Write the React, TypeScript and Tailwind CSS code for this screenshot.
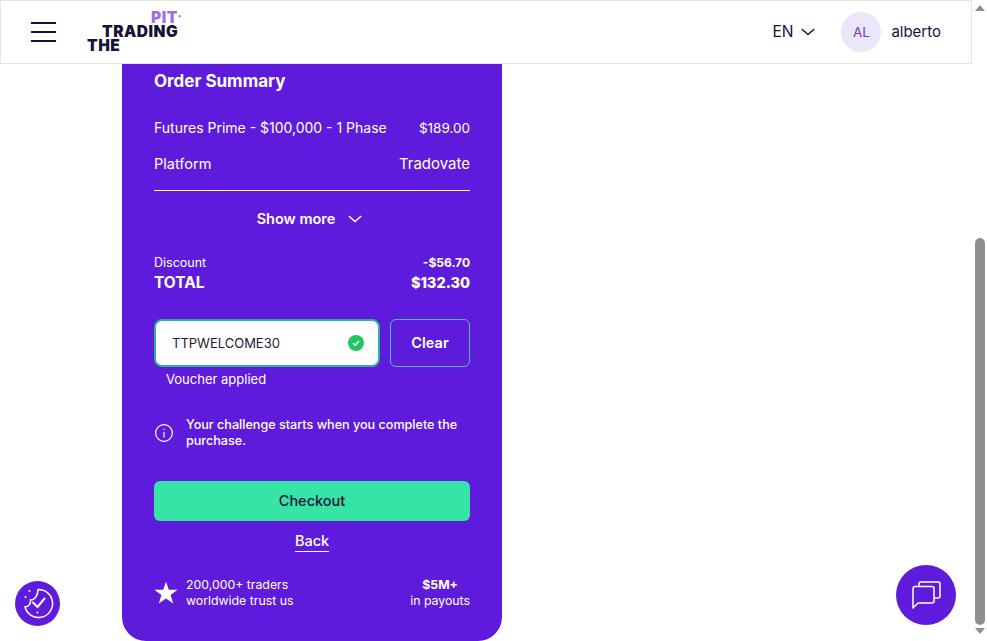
const font = { fontFamily: "Inter, 'Noto Sans', sans-serif" };

const Chevron = ({ className }: { className?: string }) => (
  <svg className={className} width="14" height="8" viewBox="0 0 14 8" fill="none" stroke="currentColor" strokeWidth="1.4">
    <path d="M.8 1 7 6.600 13.200 1" />
  </svg>
);

const Logo = () => (
  <div className="flex w-[92px] flex-col text-[15.5px] font-black leading-[14px] tracking-[0.5px] text-[#17123a]">
    <span className="ml-[64px] text-[#a06fe3]">PIT<sup className="text-[6px] leading-none">*</sup></span>
    <span className="ml-[15px]">TRADING</span>
    <span>THE</span>
  </div>
);

const Header = () => (
  <header className="flex h-[64px] shrink-0 items-center justify-between border border-[#e4e4e4] bg-white pl-[30px] pr-[30px]">
    <div className="flex items-center gap-[31px]">
      <div className="flex w-[25px] flex-col gap-[7px]">
        <div className="h-[2px] bg-[#17123a]" />
        <div className="h-[2px] bg-[#17123a]" />
        <div className="h-[2px] bg-[#17123a]" />
      </div>
      <Logo />
    </div>
    <div className="flex items-center">
      <span className="text-[15.5px] text-[#17123a]">EN</span>
      <Chevron className="ml-[8px] text-[#17123a]" />
      <div className="ml-[26px] flex h-[40px] w-[40px] items-center justify-center rounded-full bg-[#ece6fa] text-[13.5px] text-[#6a3bc8]">
        AL
      </div>
      <span className="ml-[10px] text-[15px] text-[#17123a]">alberto</span>
    </div>
  </header>
);

const OrderCard = () => (
  <section className="ml-[122px] flex h-[577px] w-[380px] flex-col rounded-b-[24px] bg-[#5f1bdc] px-[32px] pt-[7px] text-white">
    <h2 className="text-[17px] font-bold leading-[20px]">Order Summary</h2>
    <div className="mt-[27px] flex flex-col gap-[16px]">
      <div className="flex items-center justify-between text-[14px] leading-[20px]">
        <span>Futures Prime - $100,000 - 1 Phase</span>
        <span className="text-[13.500px]">$189.00</span>
      </div>
      <div className="flex items-center justify-between text-[14.5px] leading-[20px]">
        <span>Platform</span>
        <span className="text-[15px]">Tradovate</span>
      </div>
    </div>
    <div className="mt-[16px] h-px bg-white" />
    <div className="mt-[18px] flex items-center justify-center gap-[13px] pr-[5px] text-[14.5px] font-semibold leading-[20px]">
      <span>Show more</span>
      <Chevron />
    </div>
    <div className="mt-[26px] flex items-center justify-between text-[12.5px] leading-[16px]">
      <span>Discount</span>
      <span className="text-[12px] font-bold">-$56.70</span>
    </div>
    <div className="mt-[1px] flex items-center justify-between font-bold leading-[22px]">
      <span className="text-[15.5px]">TOTAL</span>
      <span className="text-[14.500px] font-extrabold">$132.30</span>
    </div>
    <div className="mt-[25px] flex gap-[10px]">
      <div className="flex h-[48px] flex-1 items-center justify-between rounded-[8px] border-[2px] border-[#2bb29a] bg-white pl-[16px] pr-[14px] text-[13px] text-[#1f1b33]">
        <span className="pt-px">TTPWELCOME30</span>
        <span className="flex h-[16px] w-[16px] items-center justify-center rounded-full bg-[#22c55e]">
          <svg width="10" height="10" viewBox="0 0 10 10" fill="none" stroke="white" strokeWidth="1.5">
            <path d="M2 5.200 4.200 7.200 8 3" />
          </svg>
        </span>
      </div>
      <div className="flex h-[48px] w-[80px] items-center justify-center rounded-[6px] border border-[#58b8c8] text-[14.5px] font-semibold">
        Clear
      </div>
    </div>
    <p className="ml-[12px] mt-[4px] text-[13px] leading-[16px]">Voucher applied</p>
    <div className="mt-[30px] flex items-center gap-[12px]">
      <svg width="20" height="20" viewBox="0 0 20 20" fill="none" stroke="white" strokeWidth="1.2" className="shrink-0">
        <circle cx="10" cy="10" r="8.400" />
        <path d="M10 9v5.500M10 5.800v1.200" />
      </svg>
      <p className="text-[12.6px] font-medium leading-[16px]">
        Your challenge starts when you complete the purchase.
      </p>
    </div>
    <button className="mt-[32px] flex h-[40px] items-center justify-center rounded-[6px] bg-[#36e5a6] text-[14.5px] font-medium text-[#17123a]">
      Checkout
    </button>
    <div className="mt-[10px] flex justify-center">
      <span className="border-b border-white text-[14.5px] font-medium leading-[20px]">Back</span>
    </div>
    <div className="mt-[25px] flex items-center justify-between text-[12.3px] leading-[16px]">
      <div className="flex items-center gap-[8px]">
        <svg width="24" height="24" viewBox="0 0 24 24" fill="white">
          <path d="M12 .8l2.800 8h8.800l-7 5.200 2.600 8.600L12 17.400l-7.200 5.200 2.600-8.600-7-5.200h8.800z" />
        </svg>
        <div>
          <div>200,000+ traders</div>
          <div>worldwide trust us</div>
        </div>
      </div>
      <div className="text-center">
        <div className="font-bold">$5M+</div>
        <div>in payouts</div>
      </div>
    </div>
  </section>
);

const Scrollbar = () => (
  <div className="flex w-[15px] shrink-0 flex-col items-center bg-white pt-[5px]">
    <svg width="10" height="6" viewBox="0 0 10 6" fill="#8f8f8f"><path d="M5 0l5 6H0z" /></svg>
    <div className="mt-[227px] h-[387px] w-[10px] rounded-full bg-[#8f8f8f]" />
    <svg className="mt-[3px]" width="10" height="6" viewBox="0 0 10 6" fill="#8f8f8f"><path d="M0 0h10L5 6z" /></svg>
  </div>
);

export default function App() {
  return (
    <div className="relative flex h-[641px] overflow-hidden bg-white" style={font}>
      <main className="flex min-w-0 flex-1 flex-col">
        <Header />
        <OrderCard />
      </main>
      <Scrollbar />
      <div className="absolute left-[15px] top-[581px] flex h-[45px] w-[45px] items-center justify-center rounded-full bg-[#5f1bdc]">
        <svg width="32" height="32" viewBox="0 0 32 32" fill="none" stroke="white" strokeWidth="1.5" strokeLinecap="round">
          <path d="M16 1.500A14 14 0 1 1 3 19C7 19 9 15 8.500 12 13 12 16 7 16 1.500" />
          <path d="M11 14.500l4.500 4.500 7-8.500" strokeWidth="2" />
          <circle cx="15.500" cy="24.500" r="1" fill="white" stroke="none" />
          <circle cx="7.500" cy="3" r="1" fill="white" stroke="none" />
          <circle cx="3.500" cy="9" r="1" fill="white" stroke="none" />
        </svg>
      </div>
      <div className="absolute left-[896px] top-[565px] flex h-[60px] w-[60px] items-center justify-center rounded-full bg-[#5f1bdc]">
        <svg width="30" height="30" viewBox="0 0 30 30" fill="none" stroke="white" strokeWidth="1.5" strokeLinejoin="round">
          <path d="M4 6.500h17a2 2 0 0 1 2 2v12.500a2 2 0 0 1-2 2H7l-5 5V8.500a2 2 0 0 1 2-2z" />
          <path d="M8 6.500V4a2 2 0 0 1 2-2h17a2 2 0 0 1 2 2v12a2 2 0 0 1-2 2h-4" />
        </svg>
      </div>
    </div>
  );
}
